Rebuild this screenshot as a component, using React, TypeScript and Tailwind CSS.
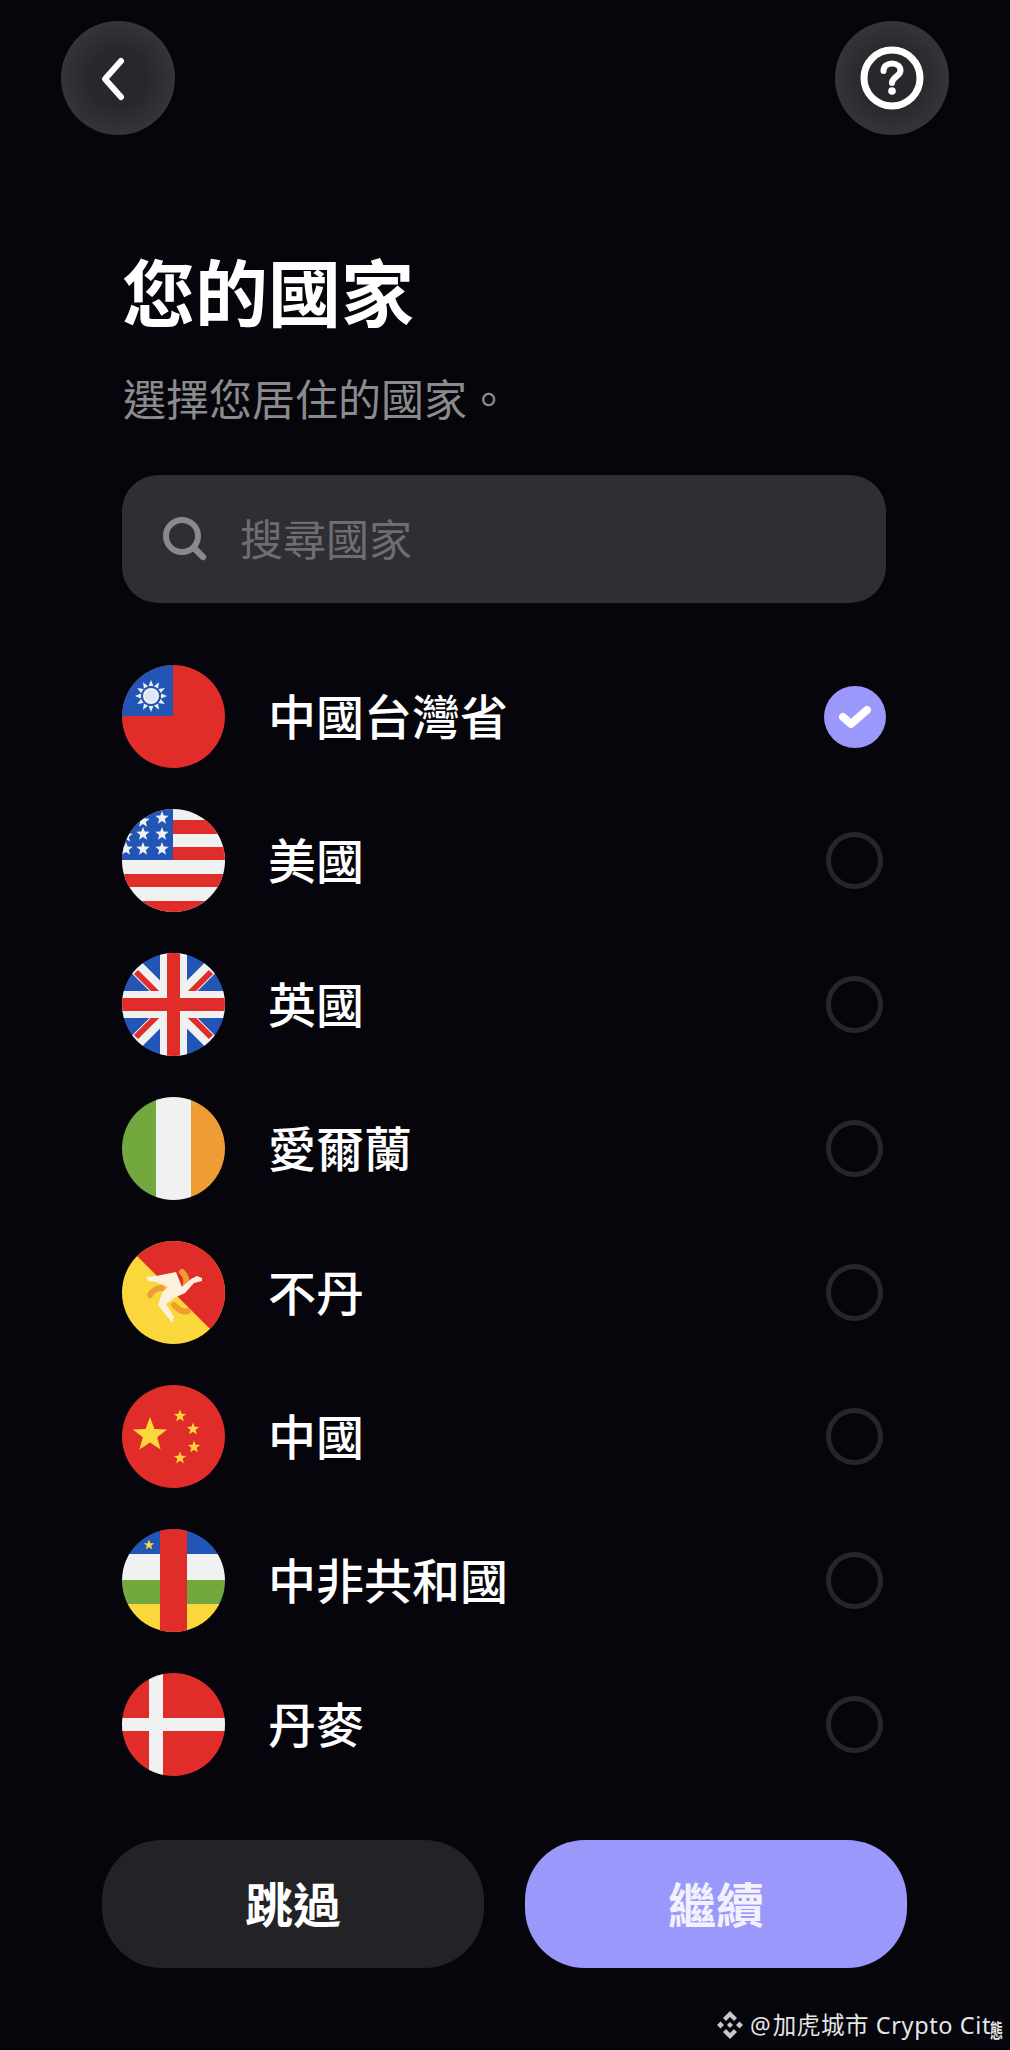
const red = '#e12d2a';
const white = '#f0f1f1';
const blue = '#2255b5';
const yellow = '#fad83c';
const green = '#72a83e';
const orange = '#f09c35';

// five point star centred on cx, cy
function Star({ cx, cy, r, fill }: { cx: number; cy: number; r: number; fill: string }) {
  const pts: string[] = [];
  for (let i = 0; i < 10; i++) {
    const rad = i % 2 === 0 ? r : r * 0.42;
    const a = -Math.PI / 2 + (i * Math.PI) / 5;
    pts.push(`${(cx + rad * Math.cos(a)).toFixed(2)},${(cy + rad * Math.sin(a)).toFixed(2)}`);
  }
  return <polygon points={pts.join(' ')} fill={fill} />;
}

function FlagTaiwan() {
  const rays = Array.from({ length: 12 }, (_, i) => i * 30);
  return (
    <>
      <rect width="103" height="103" fill={red} />
      <rect width="51" height="51" fill={blue} />
      {rays.map((deg) => (
        <polygon key={deg} points="29,15 31.4,21 26.6,21" fill={white} transform={`rotate(${deg} 29 31)`} />
      ))}
      <circle cx="29" cy="31" r="8" fill={white} />
      <circle cx="29" cy="31" r="6" fill="#dfe6f5" />
    </>
  );
}

function FlagUSA() {
  const stars = [[40, 9], [21, 12], [40, 25], [21, 25], [4, 27], [40, 40], [21, 40], [4, 40]];
  return (
    <>
      <rect width="103" height="103" fill={white} />
      <rect y="11" width="103" height="14" fill={red} />
      <rect y="38" width="103" height="13" fill={red} />
      <rect y="65" width="103" height="13" fill={red} />
      <rect y="92" width="103" height="11" fill={red} />
      <rect width="51" height="51" fill={blue} />
      {stars.map(([x, y]) => (
        <Star key={`${x}-${y}`} cx={x} cy={y} r={7} fill={white} />
      ))}
    </>
  );
}

function FlagUK() {
  return (
    <>
      <rect width="103" height="103" fill={blue} />
      <path d="M8 8 L95 95 M95 8 L8 95" stroke={white} strokeWidth="15" />
      <path d="M14 19 L40 45 M63 58 L89 84" stroke={red} strokeWidth="6" />
      <path d="M89 19 L63 45 M40 58 L14 84" stroke={red} strokeWidth="6" />
      <rect x="38" width="27" height="103" fill={white} />
      <rect y="38" width="103" height="27" fill={white} />
      <rect x="45" width="13" height="103" fill={red} />
      <rect y="45" width="103" height="13" fill={red} />
    </>
  );
}

function FlagIreland() {
  return (
    <>
      <rect width="34" height="103" fill={green} />
      <rect x="34" width="35" height="103" fill={white} />
      <rect x="69" width="34" height="103" fill={orange} />
    </>
  );
}

function FlagBhutan() {
  return (
    <>
      <rect width="103" height="103" fill={yellow} />
      <polygon points="0,0 103,0 103,103" fill={red} />
      <path d="M60 31 Q67 38 63 46" stroke={orange} strokeWidth="6" fill="none" strokeLinecap="round" />
      <path d="M28 54 Q32 47 40 47" stroke={orange} strokeWidth="6" fill="none" strokeLinecap="round" />
      <path d="M52 64 Q59 72 66 70" stroke={orange} strokeWidth="6" fill="none" strokeLinecap="round" />
      <polygon
        points="24,36 34,35 54,31 60,46 69,38 75,35 80,37 80,40 72,42 63,52 52,57 44,63 52,76 50,82 47,78 36,64 40,52 46,46 34,41 26,40"
        fill="#fdf0dc"
      />
    </>
  );
}

function FlagChina() {
  return (
    <>
      <rect width="103" height="103" fill={red} />
      <Star cx={28} cy={50} r={18} fill={yellow} />
      <Star cx={58} cy={31} r={6.5} fill={yellow} />
      <Star cx={71} cy={44} r={6.5} fill={yellow} />
      <Star cx={72} cy={62} r={6.5} fill={yellow} />
      <Star cx={58} cy={73} r={6.5} fill={yellow} />
    </>
  );
}

function FlagCAR() {
  return (
    <>
      <rect width="103" height="25" fill={blue} />
      <rect y="25" width="103" height="26" fill={white} />
      <rect y="51" width="103" height="24" fill={green} />
      <rect y="75" width="103" height="28" fill={yellow} />
      <rect x="38" width="27" height="103" fill={red} />
      <Star cx={27} cy={16} r={5.5} fill={yellow} />
    </>
  );
}

function FlagDenmark() {
  return (
    <>
      <rect width="103" height="103" fill={red} />
      <rect x="27" width="14" height="103" fill={white} />
      <rect y="45" width="103" height="13" fill={white} />
    </>
  );
}

const countries = [
  { name: '中國台灣省', flag: <FlagTaiwan />, selected: true },
  { name: '美國', flag: <FlagUSA /> },
  { name: '英國', flag: <FlagUK /> },
  { name: '愛爾蘭', flag: <FlagIreland /> },
  { name: '不丹', flag: <FlagBhutan /> },
  { name: '中國', flag: <FlagChina /> },
  { name: '中非共和國', flag: <FlagCAR /> },
  { name: '丹麥', flag: <FlagDenmark /> },
];

function CountryRow({ name, flag, selected }: { name: string; flag: React.ReactNode; selected?: boolean }) {
  return (
    <div className="flex h-[103px] items-center">
      <svg viewBox="0 0 103 103" className="h-[103px] w-[103px] shrink-0 rounded-full">
        {flag}
      </svg>
      <span className="ml-[43px] flex-1 pb-[6px] text-[48px] font-medium leading-none text-white">{name}</span>
      {selected ? (
        <div className="flex h-[62px] w-[62px] items-center justify-center rounded-full bg-[#9a98fa]">
          <svg viewBox="0 0 62 62" className="h-[62px] w-[62px]" fill="none">
            <path d="M19 31 L27 38 L43 24" stroke="white" strokeWidth="8" strokeLinecap="round" strokeLinejoin="round" />
          </svg>
        </div>
      ) : (
        <div className="mr-[3px] h-[57px] w-[57px] rounded-full border-[5px] border-[#26262a]" />
      )}
    </div>
  );
}

export default function App() {
  return (
    <div className="relative h-[2050px] w-[1010px] overflow-hidden bg-[#05050b] font-['Noto_Sans_CJK_TC',sans-serif]">
      {/* Header */}
      <div className="flex justify-between px-[61px] pt-[21px]">
        <button className="flex h-[114px] w-[114px] items-center justify-center rounded-full bg-[radial-gradient(circle,#28282c_35%,#404044_100%)]">
          <svg viewBox="0 0 114 114" className="h-[114px] w-[114px]" fill="none">
            <path d="M60 40 L44 58 L60 76" stroke="white" strokeWidth="6" strokeLinecap="round" strokeLinejoin="round" />
          </svg>
        </button>
        <button className="flex h-[114px] w-[114px] items-center justify-center rounded-full bg-[radial-gradient(circle,#28282c_35%,#404044_100%)]">
          <svg viewBox="0 0 114 114" className="h-[114px] w-[114px]" fill="none">
            <circle cx="57" cy="57" r="28" stroke="white" strokeWidth="7" />
            <path d="M48.5 50 C48.5 45 52.5 42.5 57 42.5 C62 42.5 65.5 45.5 65.5 49.5 C65.5 55.5 57 55.5 57 62" stroke="white" strokeWidth="6" strokeLinecap="round" />
            <circle cx="57" cy="70" r="3.8" fill="white" />
          </svg>
        </button>
      </div>

      {/* Content */}
      <div className="px-[122px]">
        <h1 className="mt-[104px] text-[73px] font-bold leading-[100px] text-white">您的國家</h1>
        <p className="ml-[1px] mt-[28px] text-[43px] leading-[60px] text-[#8b8b8d]">選擇您居住的國家。</p>

        <div className="mt-[48px] flex h-[128px] w-[764px] items-center rounded-[36px] bg-[#2e2e33] pl-[41px]">
          <svg viewBox="0 0 44 44" className="h-[44px] w-[44px]" fill="none">
            <circle cx="19" cy="19" r="16" stroke="#8a8a8c" strokeWidth="6" />
            <path d="M31 31 L40 40" stroke="#8a8a8c" strokeWidth="6.5" strokeLinecap="round" />
          </svg>
          <span className="ml-[33px] pb-[3px] text-[43px] leading-none text-[#6e6e72]">搜尋國家</span>
        </div>

        <div className="mt-[62px] flex w-[764px] flex-col gap-[41px]">
          {countries.map((c) => (
            <CountryRow key={c.name} name={c.name} flag={c.flag} selected={c.selected} />
          ))}
        </div>
      </div>

      {/* Footer buttons */}
      <div className="mt-[64px] flex gap-[41px] pl-[102px]">
        <button className="h-[128px] w-[382px] rounded-[60px] bg-[#232327] pb-[4px] text-[48px] font-bold text-white">跳過</button>
        <button className="h-[128px] w-[382px] rounded-[60px] bg-[#9a98fa] pb-[4px] text-[48px] font-bold text-[#f2f2ff]">繼續</button>
      </div>

      {/* Watermark */}
      <div className="absolute left-[717px] top-[2010px] flex items-center whitespace-nowrap font-['Noto_Sans','Noto_Sans_CJK_TC',sans-serif] text-[#e6e6e6]">
        <svg viewBox="0 0 26 28" className="h-[28px] w-[26px]" fill="#c8c8c8">
          <path d="M13 0 L20 7 L17 10 L13 6 L9 10 L6 7 Z" />
          <path d="M13 28 L20 21 L17 18 L13 22 L9 18 L6 21 Z" />
          <path d="M3.5 10.5 L7 14 L3.5 17.5 L0 14 Z" />
          <path d="M22.5 10.5 L26 14 L22.5 17.5 L19 14 Z" />
          <path d="M13 11 L16 14 L13 17 L10 14 Z" />
        </svg>
        <span className="ml-[7px] text-[23px] leading-[30px]">@</span>
        <span className="ml-[2px] text-[23.5px] leading-[30px] tracking-[0.6px]">加虎城市 Crypto Cit</span>
      </div>
      <span className="absolute left-[990px] top-[2020px] w-[13px] scale-y-150 font-['Noto_Sans_CJK_TC',sans-serif] text-[13px] font-bold leading-[20px] text-[#e6e6e6]">態</span>
    </div>
  );
}
